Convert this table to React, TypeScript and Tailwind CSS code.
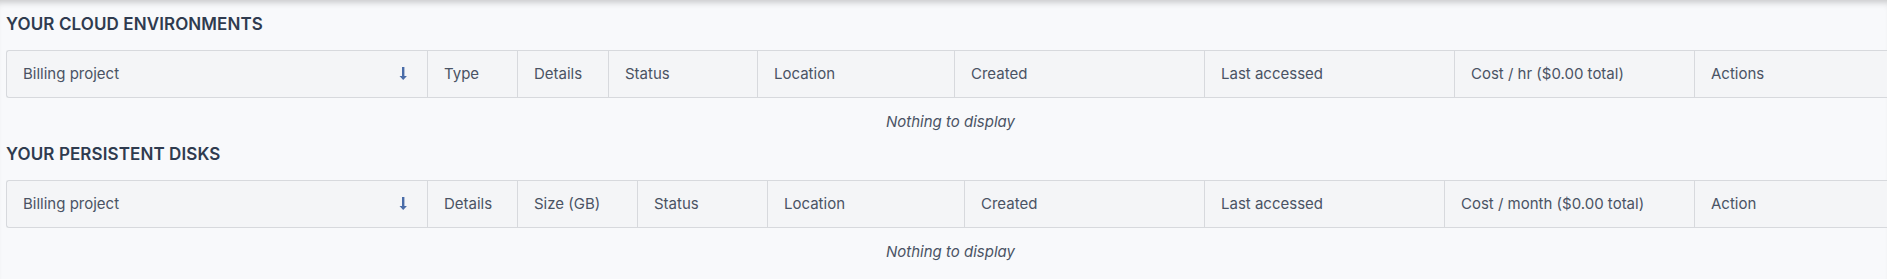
type Column = { label: string; sortable?: boolean };

const cloudColumns: Column[] = [
  { label: 'Billing project', sortable: true },
  { label: 'Type' },
  { label: 'Details' },
  { label: 'Status' },
  { label: 'Location' },
  { label: 'Created' },
  { label: 'Last accessed' },
  { label: 'Cost / hr ($0.00 total)' },
  { label: 'Actions' },
];

const diskColumns: Column[] = [
  { label: 'Billing project', sortable: true },
  { label: 'Details' },
  { label: 'Size (GB)' },
  { label: 'Status' },
  { label: 'Location' },
  { label: 'Created' },
  { label: 'Last accessed' },
  { label: 'Cost / month ($0.00 total)' },
  { label: 'Action' },
];

function SortArrow() {
  return (
    <span className="flex w-4 justify-center mb-[2px]">
      <svg width="8" height="13" viewBox="0 0 8 13" fill="#4a6ca8">
        <rect x="3" y="0" width="2.4" height="10" />
        <polygon points="0.5,9 7.9,9 4.2,13" />
      </svg>
    </span>
  );
}

function ResourceTable({ title, columns, gridClass }: { title: string; columns: Column[]; gridClass: string }) {
  return (
    <section>
      <h2 className="h-[17px] mb-[17px] text-[17px] leading-[17px] font-semibold text-[#2f3b4f] tracking-[0.1px]">
        {title}
      </h2>
      <div className="w-[1889px] shrink-0">
        <div className={`grid ${gridClass} h-[48px] bg-[#f4f5f7] border-y border-l border-[#d7d9dd] rounded-l-[3px]`}>
          {columns.map((c, i) => (
            <div
              key={c.label}
              className={`flex items-center px-4 ${i !== 0 ? 'border-l border-[#d7d9dd]' : ''} ${c.sortable ? 'justify-between' : ''}`}
            >
              <span>{c.label}</span>
              {c.sortable ? <SortArrow /> : null}
            </div>
          ))}
        </div>
        <div className="flex h-[48px] items-center justify-center italic">
          Nothing to display
        </div>
      </div>
    </section>
  );
}

export default function App() {
  return (
    <div
      className="min-h-[279px] w-full overflow-hidden bg-[#f8f9fb] pt-4 pl-[6px] text-[15px] text-[#4a5364] shadow-[inset_0_7px_7px_-5px_rgba(0,0,0,0.22)]"
      style={{ fontFamily: 'Inter, "Noto Sans", sans-serif' }}
    >
      <ResourceTable
        title="YOUR CLOUD ENVIRONMENTS"
        columns={cloudColumns}
        gridClass="grid-cols-[420px_90px_91px_149px_197px_250px_250px_240px_1fr]"
      />
      <ResourceTable
        title="YOUR PERSISTENT DISKS"
        columns={diskColumns}
        gridClass="grid-cols-[420px_90px_120px_130px_197px_240px_240px_250px_1fr]"
      />
    </div>
  );
}
